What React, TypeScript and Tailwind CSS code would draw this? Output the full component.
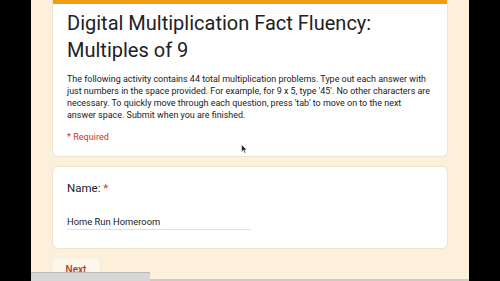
import React from 'react';

// Google Forms style quiz page, framed by black pillarbox bars
export default function App() {
  return (
    <div className="relative w-[500px] h-[281px] overflow-hidden bg-black flex" style={{ fontFamily: 'Roboto, "Liberation Sans", sans-serif' }}>
      <div className="w-[31px] shrink-0 bg-black" />
      <div className="w-[438px] shrink-0 bg-[#fcf0da] px-[21px] flex flex-col">
        {/* header card */}
        <div className="h-[157px] shrink-0 bg-white rounded-b-[6px] border border-t-0 border-[#efe3cf] overflow-hidden">
          <div className="h-[4px] bg-[#f19d12]" />
          <div className="pl-[14px] pr-[4px]">
            <h1 className="mt-[6px] text-[20px] leading-[27px] text-[#202124]">
              Digital Multiplication Fact Fluency:<br />Multiples of 9
            </h1>
            <p className="mt-[9px] text-[8.95px] leading-[12px] text-[#202124] whitespace-nowrap">
              The following activity contains 44 total multiplication problems. Type out each answer with<br />
              just numbers in the space provided. For example, for 9 x 5, type '45'. No other characters are<br />
              necessary. To quickly move through each question, press 'tab' to move on to the next<br />
              answer space. Submit when you are finished.
            </p>
            <p className="mt-[10px] text-[9.1px] leading-[12px] text-[#d93025]">* Required</p>
          </div>
        </div>

        {/* name question */}
        <div className="mt-[9px] h-[83px] shrink-0 bg-white rounded-[6px] border border-[#efe3cf] px-[14px]">
          <div className="mt-[14px] text-[11.5px] leading-[14px] text-[#202124]">
            Name: <span className="text-[#d93025]">*</span>
          </div>
          <div className="mt-[21px] w-[184px] border-b border-[#e0e0e0] pb-[1px] text-[9.4px] leading-[12px] text-[#202124]">
            Home Run Homeroom
          </div>
        </div>

        <div className="mt-[9px] w-[48px] h-[26px] shrink-0 bg-[#fdf6ea] rounded-[4px] shadow-[0_1px_2px_rgba(0,0,0,0.12)] flex items-center justify-center text-[10px] font-medium text-[#b8392c] pb-[3px]">
          Next
        </div>
      </div>
      <div className="w-[31px] shrink-0 bg-black" />

      {/* mouse pointer */}
      <svg className="absolute left-[241px] top-[144px]" width="7" height="10" viewBox="0 0 7 10">
        <path d="M0.5 0.5 L0.5 8 L2.3 6.3 L3.6 9.3 L4.8 8.8 L3.5 5.9 L6 5.9 Z" fill="#222" stroke="#fff" strokeWidth="0.6" />
      </svg>

      {/* bottom overlay strips */}
      <div className="absolute left-[31px] bottom-0 w-[119px] h-[9px] bg-[#d6d6d6] border-t border-[#b9b9b9]" />
      <div className="absolute left-[150px] bottom-0 w-[319px] h-[2px] bg-[#cfcac2]" />
    </div>
  );
}
